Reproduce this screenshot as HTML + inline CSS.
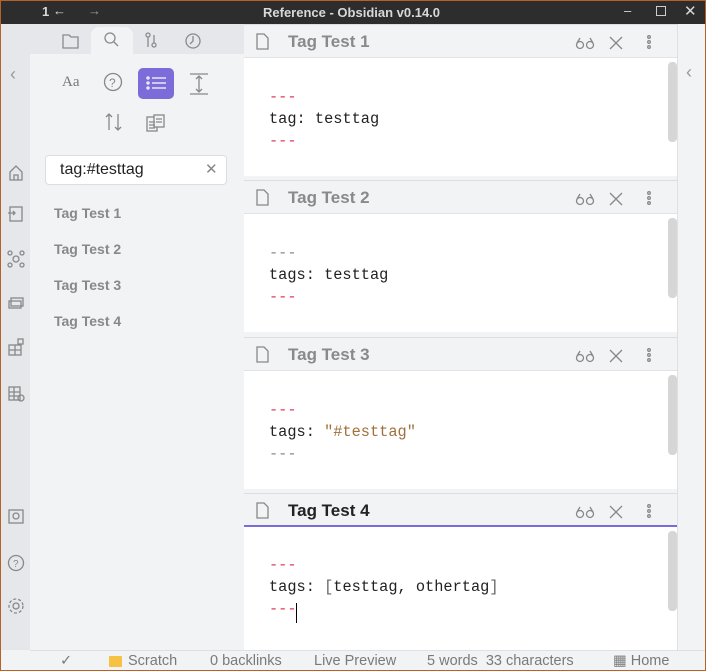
<!DOCTYPE html>
<html><head><style>
*{margin:0;padding:0;box-sizing:border-box}
body{width:706px;height:671px;overflow:hidden;background:#b8602a;font-family:"Liberation Sans",sans-serif;position:relative}
.a{position:absolute}
.win{left:1px;top:1px;width:704px;height:669px;background:#f2f3f5;overflow:hidden}
.title{left:0;top:0;width:704px;height:23px;background:#2d2d2d;color:#d8d8d8;font-size:13px}
.rib{left:0;top:23px;width:29px;height:626px;background:#e6e7ea}
.side{left:29px;top:23px;width:214px;height:626px;background:#f2f3f5}
.tabs{left:29px;top:23px;width:214px;height:30px;background:#e6e7ea}
.pane{left:243px;width:433px}
.hd{height:34px;background:#f2f3f5;border-bottom:1px solid #e2e3e6;border-top:1px solid #dcdde0;position:relative}
.hd .t{position:absolute;left:44px;top:7px;font-size:17px;font-weight:bold;color:#8a8a8a}
.ct{background:#fff;position:relative;font-family:"Liberation Mono",monospace;font-size:15.3px;color:#222}
.ct .l{position:absolute;left:25px}
.red{color:#e0385a}
.sb{position:absolute;right:0;top:4px;width:9px;height:80px;background:#d6d6d6;border-radius:4px}
.st{left:29px;top:649px;width:676px;height:21px;background:#f2f3f5;border-top:1px solid #e0e0e0;font-size:14.5px;color:#7a7a7a}
.st span{position:absolute;top:2px}
.res{position:absolute;left:24px;font-size:14px;font-weight:bold;color:#888}
</style></head><body>
<div class="a win">
<div class="a title"><span class="a" style="left:41px;top:3px;font-weight:bold">1</span><span class="a" style="left:52px;top:2px">←</span><span class="a" style="left:87px;top:2px;color:#999">→</span>
<span class="a" style="left:262px;top:4px;font-weight:bold">Reference - Obsidian v0.14.0</span>
<span class="a" style="left:623px;top:2px">–</span><span class="a" style="left:655px;top:5px;width:10px;height:10px;border:1px solid #ccc"></span><span class="a" style="left:683px;top:1px;font-size:15px">✕</span></div>
<div class="a rib">
<div class="a" style="left:9px;top:40px;color:#999;font-size:18px">‹</div>
<svg class="a" style="left:6px;top:140px" width="18" height="520" fill="none" stroke="#888" stroke-width="1.3">
<path d="M8 -44 V-34 A2 2 0 0 0 12 -34 V-44 A3 3 0 0 0 6 -44 V-33"/>
<path d="M3 8 L9 2 L15 8 V16 H3Z M7 16 V11 H11 V16"/>
<rect x="3" y="43" width="12" height="14"/><path d="M1 49 H8 M6 47 L8 49 L6 51"/>
<circle cx="9" cy="95" r="3"/><circle cx="3" cy="89" r="2"/><circle cx="15" cy="89" r="2"/><circle cx="3" cy="101" r="2"/><circle cx="15" cy="101" r="2"/>
<rect x="4" y="134" width="12" height="8"/><rect x="2" y="137" width="12" height="7"/>
<rect x="2" y="181" width="12" height="10"/><path d="M2 186 H14 M8 181 V191"/><rect x="11" y="175" width="5" height="5"/>
<rect x="2" y="223" width="11" height="13"/><path d="M2 228 H13 M2 232 H13 M7 223 V236"/><circle cx="14" cy="234" r="3"/>
<rect x="2" y="346" width="14" height="13"/><circle cx="9" cy="352" r="3"/>
<circle cx="9" cy="399" r="7.5"/><text x="6" y="403" font-size="10" fill="#888" stroke="none">?</text>
<circle cx="9" cy="442" r="3"/><circle cx="9" cy="442" r="7" stroke-dasharray="3 2"/>
</svg>
</div>
<div class="a tabs">
<div class="a" style="left:61px;top:3px;width:42px;height:27px;background:#f2f3f5;border-radius:8px 8px 0 0"></div>
<svg class="a" style="left:0;top:0" width="214" height="30" fill="none" stroke="#8a8a8a" stroke-width="1.3">
<path d="M33 11 H39 L41 13 H48 V24 H33Z"/><circle cx="80" cy="14" r="5"/><path d="M84 18 L88 22"/>
<circle cx="118" cy="11" r="2"/><path d="M118 13 V23 M124 11 V19"/><circle cx="124" cy="21" r="2"/>
<circle cx="163" cy="17" r="7"/><path d="M163 12 V17 L160 20"/></svg></div>
<div class="a side" style="top:53px;height:596px">
<span class="a" style="left:32px;top:20px;font-size:15px;color:#777;font-family:'Liberation Serif',serif">Aa</span>
<svg class="a" style="left:73px;top:18px" width="20" height="20" fill="none" stroke="#888" stroke-width="1.3"><circle cx="10" cy="10" r="8.5"/><text x="6" y="15" font-size="12" fill="#888" stroke="none">?</text></svg>
<div class="a" style="left:108px;top:14px;width:36px;height:31px;background:#7b6cd9;border-radius:5px"></div>
<svg class="a" style="left:108px;top:14px" width="36" height="31" stroke="#fff" stroke-width="1.3"><path d="M14 10 H28 M14 15 H28 M14 20 H28"/><circle cx="10" cy="10" r="1"/><circle cx="10" cy="15" r="1"/><circle cx="10" cy="20" r="1"/></svg>
<svg class="a" style="left:158px;top:18px" width="22" height="24" fill="none" stroke="#888" stroke-width="1.3"><path d="M2 2 H20 M2 22 H20 M11 4 V20 M8 7 L11 4 L14 7 M8 17 L11 20 L14 17"/></svg>
<svg class="a" style="left:74px;top:58px" width="20" height="20" fill="none" stroke="#888" stroke-width="1.3"><path d="M5 2 V18 M2 5 L5 2 L8 5 M14 2 V18 M11 15 L14 18 L17 15"/></svg>
<svg class="a" style="left:115px;top:59px" width="22" height="20" fill="none" stroke="#888" stroke-width="1.3"><rect x="2" y="4" width="10" height="14"/><rect x="9" y="2" width="10" height="12" fill="#f2f3f5"/><path d="M4 9H10M4 12H10M4 15H10M11 6H17M11 9H17"/></svg>
<div class="a" style="left:15px;top:101px;width:182px;height:30px;background:#fff;border:1px solid #dcdde0;border-radius:4px"><span class="a" style="left:14px;top:5px;font-size:16px;color:#222">tag:#testtag</span><span class="a" style="left:159px;top:4px;color:#888;font-size:15px">✕</span></div>
<span class="res" style="top:151px">Tag Test 1</span><span class="res" style="top:187px">Tag Test 2</span><span class="res" style="top:223px">Tag Test 3</span><span class="res" style="top:259px">Tag Test 4</span>
</div>

<div class="a pane" style="top:23px"><div class="hd"><span class="t">Tag Test 1</span></div><div class="ct" style="height:118px"><span class="l red" style="top:30px">---</span><span class="l" style="top:52px">tag: testtag</span><span class="l red" style="top:74px">---</span><div class="sb"></div></div></div>
<div class="a pane" style="top:179px"><div class="hd"><span class="t">Tag Test 2</span></div><div class="ct" style="height:118px"><span class="l" style="top:30px;color:#888">---</span><span class="l" style="top:52px">tags: testtag</span><span class="l red" style="top:74px">---</span><div class="sb"></div></div></div>
<div class="a pane" style="top:336px"><div class="hd"><span class="t">Tag Test 3</span></div><div class="ct" style="height:118px"><span class="l red" style="top:30px">---</span><span class="l" style="top:52px">tags: <span style="color:#a0703a">"#testtag"</span></span><span class="l" style="top:74px;color:#888">---</span><div class="sb"></div></div></div>
<div class="a pane" style="top:492px"><div class="hd" style="border-bottom:2px solid #7b6cd9"><span class="t" style="color:#222">Tag Test 4</span></div><div class="ct" style="height:123px"><span class="l red" style="top:29px">---</span><span class="l" style="top:51px">tags: <span style="color:#666">[</span>testtag, othertag<span style="color:#666">]</span></span><span class="l red" style="top:73px">---</span><div class="a" style="left:52px;top:76px;width:1px;height:20px;background:#000"></div><div class="sb"></div></div></div>
<svg class="a" style="left:243px;top:0" width="433" height="649" fill="none" stroke="#888" stroke-width="1.3">
<g id="h"><path d="M13 33 H20 L24 37 V48 H13Z"/><circle cx="336" cy="44" r="3.5"/><circle cx="346" cy="44" r="3.5"/><path d="M333 42 L336 37 M349 42 L346 37"/><path d="M366 36 L378 48 M378 36 L366 48"/><circle cx="405" cy="36" r="1.3"/><circle cx="405" cy="41" r="1.3"/><circle cx="405" cy="46" r="1.3"/></g>
<use href="#h" y="156"/><use href="#h" y="313"/><use href="#h" y="469"/></svg>
<div class="a" style="left:676px;top:23px;width:28px;height:626px;background:#f2f3f5;border-left:1px solid #e0e0e0"><span class="a" style="left:8px;top:38px;color:#999;font-size:18px">‹</span></div>
<div class="a st"><span style="left:30px">✓</span><span style="left:79px;top:5px;width:13px;height:11px;background:#f5c242;border-radius:1px"></span><span style="left:98px">Scratch</span><span style="left:180px">0 backlinks</span><span style="left:284px">Live Preview</span><span style="left:397px">5 words&nbsp; 33 characters</span><span style="left:583px">▦ Home</span></div>
</div>
</body></html>
